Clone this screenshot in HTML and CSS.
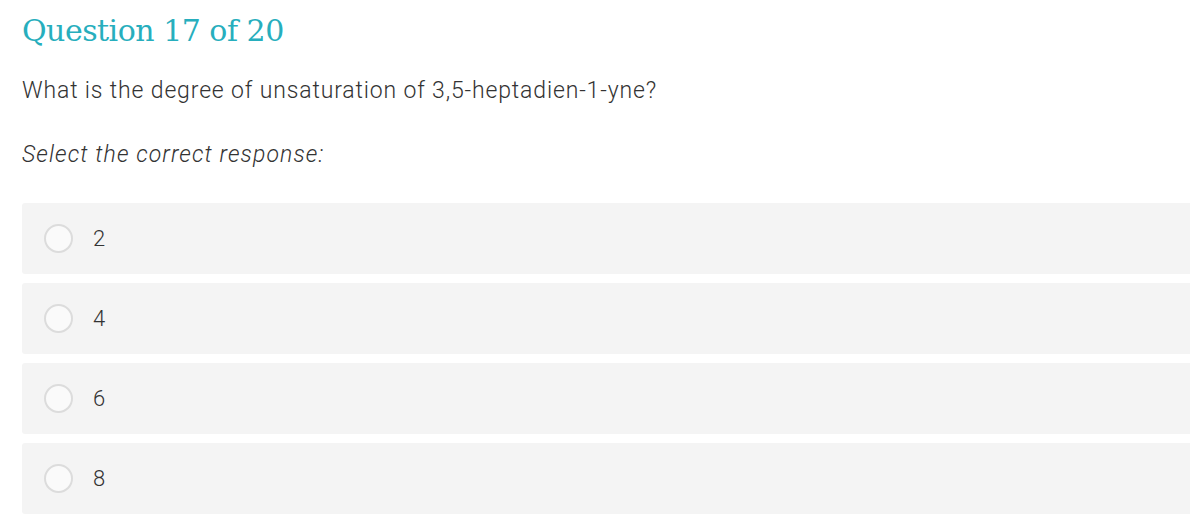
FILE: index.html
```html
<!DOCTYPE html>
<html>
<head>
<meta charset="utf-8">
<link rel="stylesheet" href="styles.css">
</head>
<body>
<div class="quiz">
  <h2 class="title">Question 17 of 20</h2>
  <p class="question">What is the degree of unsaturation of 3,5-heptadien-1-yne?</p>
  <p class="prompt">Select the correct response:</p>
  <div class="options">
    <label class="option"><span class="radio"></span><span class="val">2</span></label>
    <label class="option"><span class="radio"></span><span class="val">4</span></label>
    <label class="option"><span class="radio"></span><span class="val">6</span></label>
    <label class="option"><span class="radio"></span><span class="val">8</span></label>
  </div>
</div>
</body>
</html>
```
FILE: styles.css
```css
html, body {
  margin: 0;
  padding: 0;
  background: #fff;
  overflow: hidden;
}
.quiz {
  padding: 13px 0 0 22px;
  font-family: Roboto, "Liberation Sans", sans-serif;
  color: #333;
}
.title {
  margin: 0;
  font-family: "DejaVu Serif", "Liberation Serif", serif;
  font-weight: normal;
  font-size: 30px;
  line-height: 36px;
  color: #27aebd;
  letter-spacing: -0.5px;
}
.question {
  margin: 28px 0 0 0;
  font-size: 23px;
  line-height: 28px;
  font-weight: 300;
  letter-spacing: 0.85px;
  color: #333;
}
.prompt {
  margin: 36px 0 0 0;
  font-size: 23px;
  line-height: 28px;
  font-style: italic;
  font-weight: 300;
  letter-spacing: 1.1px;
  color: #333;
}
.options {
  margin-top: 34px;
  display: flex;
  flex-direction: column;
  gap: 9px;
  width: 1180px;
}
.option {
  display: flex;
  align-items: center;
  height: 71px;
  background: #f4f4f4;
  border-radius: 3px;
  padding-left: 22px;
  box-sizing: border-box;
}
.radio {
  width: 25px;
  height: 25px;
  border: 2px solid #dcdcdc;
  border-radius: 50%;
  background: #fafafa;
  flex: none;
}
.val {
  margin-left: 20px;
  font-size: 22px;
  font-weight: 300;
  color: #333;
}
```
